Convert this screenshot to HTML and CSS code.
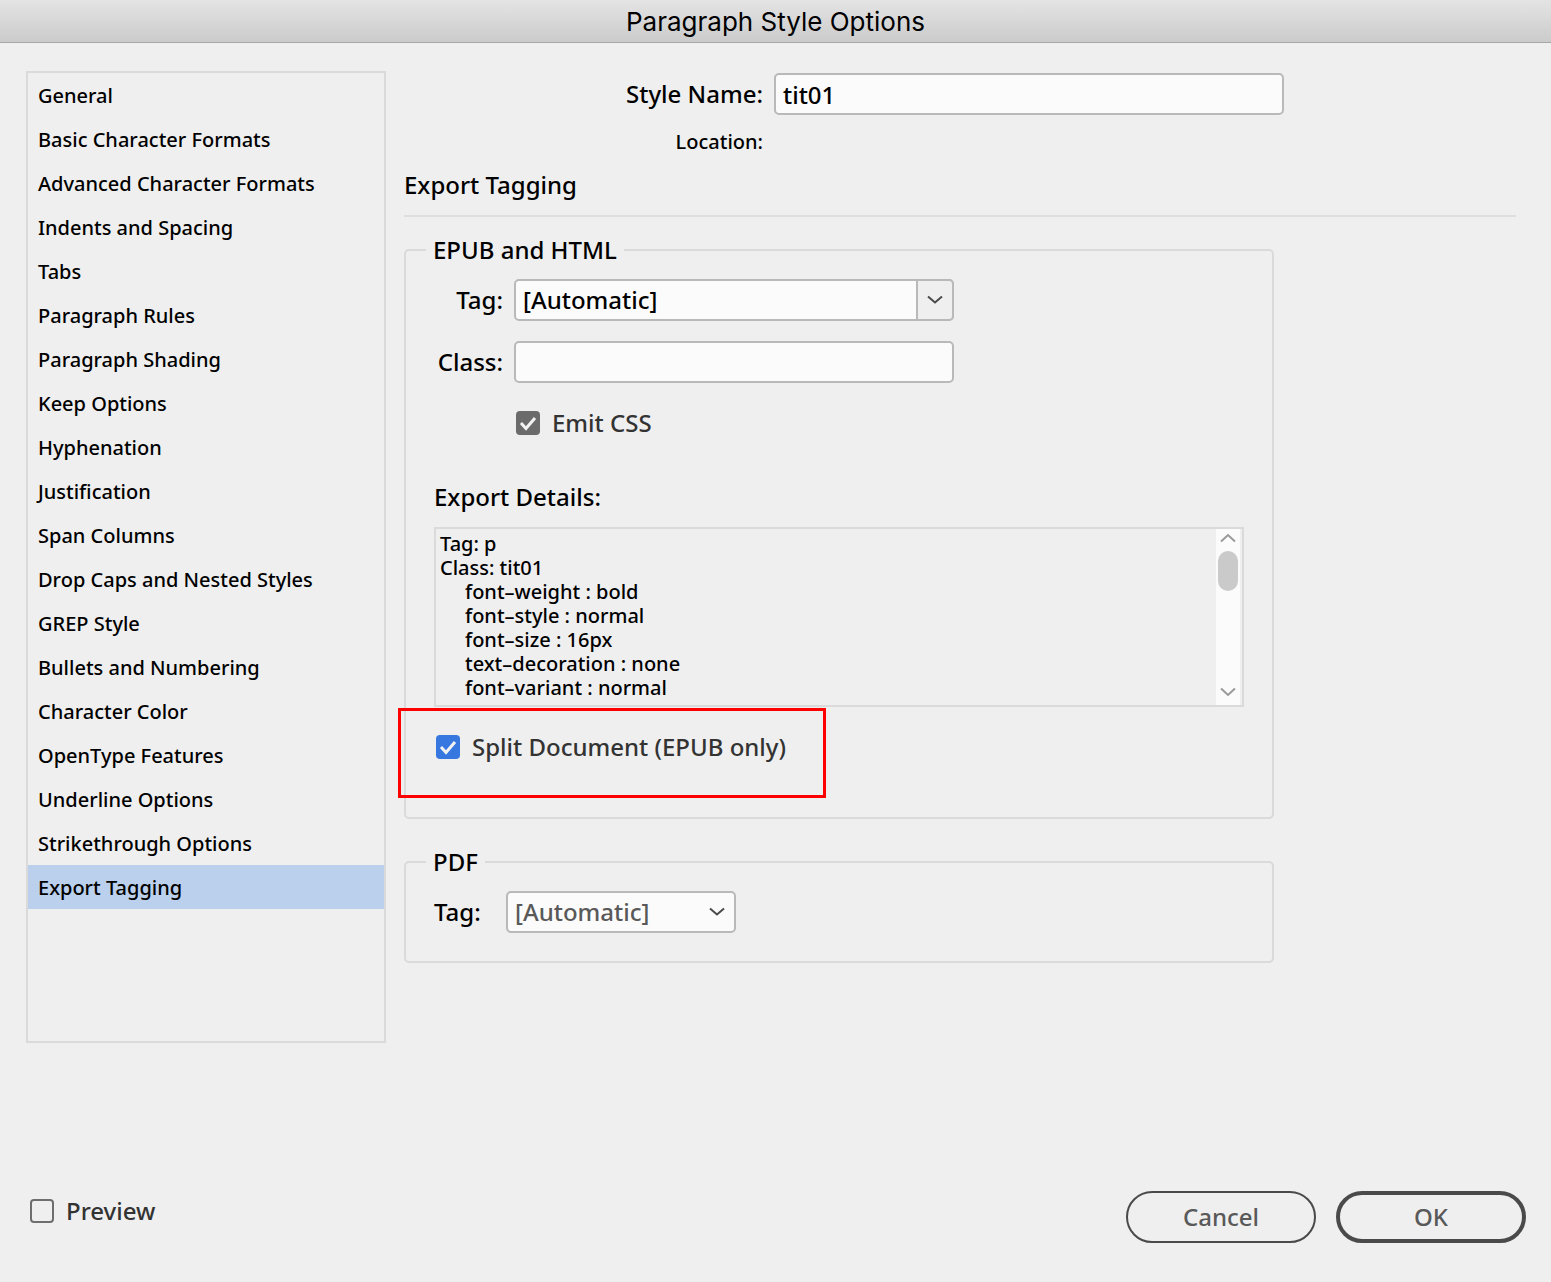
FILE: index.html
```html
<!DOCTYPE html>
<html lang="en">
<head>
    <meta charset="UTF-8">
    <meta name="viewport" content="width=device-width, initial-scale=1.0">
    <title>Paragraph Style Options</title>
    <link rel="stylesheet" href="styles.css">
</head>
<body>
    <header class="titlebar">
        <h1>Paragraph Style Options</h1>
    </header>

    <form class="dialog">
        <div class="content">
            <nav class="sidebar">
                <ul>
                    <li><a href="#">General</a></li>
                    <li><a href="#">Basic Character Formats</a></li>
                    <li><a href="#">Advanced Character Formats</a></li>
                    <li><a href="#">Indents and Spacing</a></li>
                    <li><a href="#">Tabs</a></li>
                    <li><a href="#">Paragraph Rules</a></li>
                    <li><a href="#">Paragraph Shading</a></li>
                    <li><a href="#">Keep Options</a></li>
                    <li><a href="#">Hyphenation</a></li>
                    <li><a href="#">Justification</a></li>
                    <li><a href="#">Span Columns</a></li>
                    <li><a href="#">Drop Caps and Nested Styles</a></li>
                    <li><a href="#">GREP Style</a></li>
                    <li><a href="#">Bullets and Numbering</a></li>
                    <li><a href="#">Character Color</a></li>
                    <li><a href="#">OpenType Features</a></li>
                    <li><a href="#">Underline Options</a></li>
                    <li><a href="#">Strikethrough Options</a></li>
                    <li><a href="#" class="active" aria-current="page">Export Tagging</a></li>
                </ul>
            </nav>

            <main class="panel">
                <div class="name-row">
                    <label for="styleName">Style Name:</label>
                    <input type="text" class="field" id="styleName" name="styleName" value="tit01">
                </div>
                <div class="location">Location:</div>

                <h2>Export Tagging</h2>

                <fieldset class="group group-epub">
                    <legend>EPUB and HTML</legend>

                    <div class="form-grid">
                        <label for="epubTag">Tag:</label>
                        <div class="select-box combo">
                            <select class="field" id="epubTag" name="epubTag">
                                <option>[Automatic]</option>
                                <option>p</option>
                                <option>h1</option>
                                <option>h2</option>
                            </select>
                            <span class="arrow">
                                <svg width="16" height="10" viewBox="0 0 16 10"><path d="M1 1.5 L8 7.5 L15 1.5"/></svg>
                            </span>
                        </div>

                        <label for="epubClass">Class:</label>
                        <input type="text" class="field" id="epubClass" name="epubClass">
                    </div>

                    <div class="check emit">
                        <input type="checkbox" id="emitCss" name="emitCss" checked>
                        <label for="emitCss">Emit CSS</label>
                    </div>

                    <h3>Export Details:</h3>
                    <div class="details">
                        <div class="details-text">
                            <p>Tag: p</p>
                            <p>Class: tit01</p>
                            <p class="indent">font–weight : bold</p>
                            <p class="indent">font–style : normal</p>
                            <p class="indent">font–size : 16px</p>
                            <p class="indent">text–decoration : none</p>
                            <p class="indent">font–variant : normal</p>
                        </div>
                        <div class="scrollbar">
                            <svg width="16" height="10" viewBox="0 0 16 10"><path d="M1 8.5 L8 2 L15 8.5"/></svg>
                            <div class="thumb"></div>
                            <svg width="16" height="10" viewBox="0 0 16 10"><path d="M1 1.5 L8 8 L15 1.5"/></svg>
                        </div>
                    </div>

                    <div class="check split">
                        <input type="checkbox" class="blue" id="splitDoc" name="splitDoc" checked>
                        <label for="splitDoc">Split Document (EPUB only)</label>
                    </div>
                </fieldset>

                <fieldset class="group group-pdf">
                    <legend>PDF</legend>
                    <div class="pdf-row">
                        <label for="pdfTag">Tag:</label>
                        <div class="select-box">
                            <select class="field" id="pdfTag" name="pdfTag">
                                <option>[Automatic]</option>
                                <option>P</option>
                                <option>H1</option>
                            </select>
                            <span class="arrow">
                                <svg width="16" height="10" viewBox="0 0 16 10"><path d="M1 1.5 L8 7.5 L15 1.5"/></svg>
                            </span>
                        </div>
                    </div>
                </fieldset>
            </main>
        </div>

        <footer class="footer">
            <div class="check">
                <input type="checkbox" id="preview" name="preview">
                <label for="preview">Preview</label>
            </div>
            <div class="buttons">
                <button type="button" class="btn">Cancel</button>
                <button type="button" class="btn btn-default">OK</button>
            </div>
        </footer>
    </form>
</body>
</html>
```

FILE: styles.css
```css
:root {
    --bg: #efefef;
    --field: #fbfbfb;
    --border: #b9b9b9;
    --line: #dadada;
    --dark: #4a4a4a;
    --text: #000;
    --selected: #bad0ec;
    --blue: #3777e0;
}

*,
*::before,
*::after {
    box-sizing: border-box;
    margin: 0;
    padding: 0;
}

body {
    display: flex;
    flex-direction: column;
    min-height: 100vh;
    background-color: var(--bg);
    color: var(--text);
    font-family: "Noto Sans", "Open Sans", sans-serif;
    font-size: 24px;
    font-weight: 500;
    line-height: 32px;
}

.titlebar {
    height: 43px;
    padding-top: 1px;
    background: linear-gradient(#e4e4e4, #cbcbcb);
    border-bottom: 1px solid #a8a8a8;
    text-align: center;
}

.titlebar h1 {
    font-family: Inter, Roboto, sans-serif;
    font-size: 26px;
    font-weight: 400;
    line-height: 42px;
}

.dialog {
    flex: 1;
    display: flex;
    flex-direction: column;
    padding: 28px 25px 39px 26px;
}

.content {
    flex: 1;
    display: flex;
    gap: 18px;
}

/* Category list */
.sidebar {
    flex: 0 0 360px;
    border: 2px solid var(--line);
}

.sidebar ul {
    list-style: none;
}

.sidebar a {
    display: block;
    padding: 2px 10px 0;
    color: var(--text);
    font-size: 20px;
    line-height: 42px;
    text-decoration: none;
}

.sidebar a.active {
    background-color: var(--selected);
}

/* Right side */
.panel {
    flex: 1;
    min-width: 0;
    padding: 2px 10px 0 0;
}

.name-row {
    display: grid;
    grid-template-columns: 359px minmax(0, 510px);
    column-gap: 11px;
    align-items: center;
    text-align: right;
}

.location {
    width: 359px;
    margin-top: 15px;
    font-size: 20px;
    line-height: 24px;
    text-align: right;
}

h2,
h3 {
    font-size: 24px;
    font-weight: 500;
}

h2 {
    margin-top: 15px;
    padding-bottom: 14px;
    border-bottom: 2px solid #dfdfdf;
}

.field {
    display: block;
    width: 100%;
    height: 42px;
    padding: 0 7px;
    border: 2px solid var(--border);
    border-radius: 5px;
    background-color: var(--field);
    color: var(--text);
    font: inherit;
    appearance: none;
}

.field:focus {
    outline: none;
    border-color: var(--blue);
}

.group {
    max-width: 870px;
    border: 2px solid var(--line);
    border-radius: 5px;
    padding: 13px 28px 28px;
}

.group legend {
    margin-left: -8px;
    padding: 0 7px;
}

.group-epub {
    margin-top: 17px;
    padding-bottom: 54px;
}

.group-pdf {
    margin-top: 27px;
}

.form-grid {
    display: grid;
    grid-template-columns: 69px minmax(0, 440px);
    gap: 20px 11px;
    align-items: center;
    text-align: right;
}

.pdf-row {
    display: grid;
    grid-template-columns: 61px 230px;
    column-gap: 11px;
    align-items: center;
}

.select-box {
    position: relative;
}

.arrow {
    position: absolute;
    top: 0;
    right: 0;
    display: flex;
    align-items: center;
    justify-content: center;
    width: 38px;
    height: 42px;
    pointer-events: none;
}

.combo .arrow {
    border: 2px solid var(--border);
    border-radius: 0 5px 5px 0;
    background-color: var(--bg);
}

svg {
    fill: none;
    stroke: var(--dark);
    stroke-width: 2;
}

.pdf-row .field {
    color: #595959;
}

/* Checkboxes */
.check {
    display: flex;
    align-items: center;
    gap: 12px;
    color: #333;
}

.check input {
    width: 24px;
    height: 24px;
    border: 2px solid #6e6e6e;
    border-radius: 4px;
    appearance: none;
}

.check input:checked {
    border: none;
    background: #6b6b6b url("data:image/svg+xml,%3Csvg xmlns='http://www.w3.org/2000/svg' viewBox='0 0 24 24'%3E%3Cpath d='M5 12 L10 17.5 L19 7' fill='none' stroke='%23f2f2f2' stroke-width='3'/%3E%3C/svg%3E");
}

.check input.blue:checked {
    background-color: var(--blue);
}

.emit {
    margin: 24px 0 42px;
    padding-left: 82px;
}

.details {
    display: flex;
    justify-content: space-between;
    height: 180px;
    margin-top: 14px;
    padding-right: 2px;
    border: 2px solid var(--line);
}

.details-text {
    padding: 3px 4px;
    font-size: 20px;
    line-height: 24px;
}

.indent {
    padding-left: 25px;
}

.scrollbar {
    display: flex;
    flex-direction: column;
    align-items: center;
    width: 24px;
    padding: 4px 0 8px;
    background-color: var(--field);
}

.scrollbar svg {
    stroke: #999;
}

.thumb {
    width: 20px;
    height: 40px;
    margin: 8px 0 auto;
    border-radius: 10px;
    background-color: #cacaca;
}

.split {
    position: relative;
    margin-top: 24px;
    padding-left: 2px;
}

/* Red marker around the split option */
.split::after {
    content: "";
    position: absolute;
    top: -23px;
    left: -36px;
    width: 428px;
    height: 90px;
    border: 3px solid #f00;
    pointer-events: none;
}

.footer {
    display: flex;
    justify-content: space-between;
    margin-top: 148px;
}

.footer .check {
    height: 40px;
    padding-left: 4px;
}

.buttons {
    display: flex;
    gap: 20px;
}

.btn {
    width: 190px;
    height: 52px;
    border: 2px solid var(--dark);
    border-radius: 26px;
    background: none;
    color: #595959;
    font: inherit;
    cursor: pointer;
}

.btn-default {
    border-width: 4px;
}
```
